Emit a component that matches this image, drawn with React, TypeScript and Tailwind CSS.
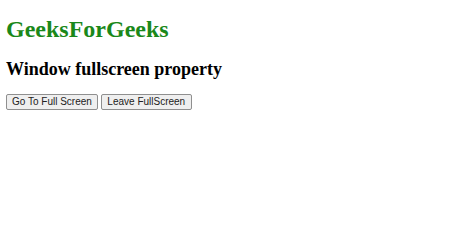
export default function App() {
  return (
    <div className="min-h-screen bg-white px-[6px] pt-[16px] font-['Liberation_Serif',serif] text-black">
      <h1 className="text-[24px] font-bold leading-[1.15] text-[#1a881a]">GeeksForGeeks</h1>
      <h2 className="mt-[15px] text-[18px] font-bold leading-[1.15]">Window fullscreen property</h2>
      <div className="mt-[15px] flex gap-[3px] font-['Liberation_Sans',Arial,sans-serif] text-[10px]">
        <button className="rounded-[2px] border border-[#8f8f8f] bg-[#efefef] px-[5px] py-[1px] leading-[1.15] text-[#222]">
          Go To Full Screen
        </button>
        <button className="rounded-[2px] border border-[#8f8f8f] bg-[#efefef] px-[5.5px] py-[1px] leading-[1.15] text-[#222]">
          Leave FullScreen
        </button>
      </div>
    </div>
  );
}
